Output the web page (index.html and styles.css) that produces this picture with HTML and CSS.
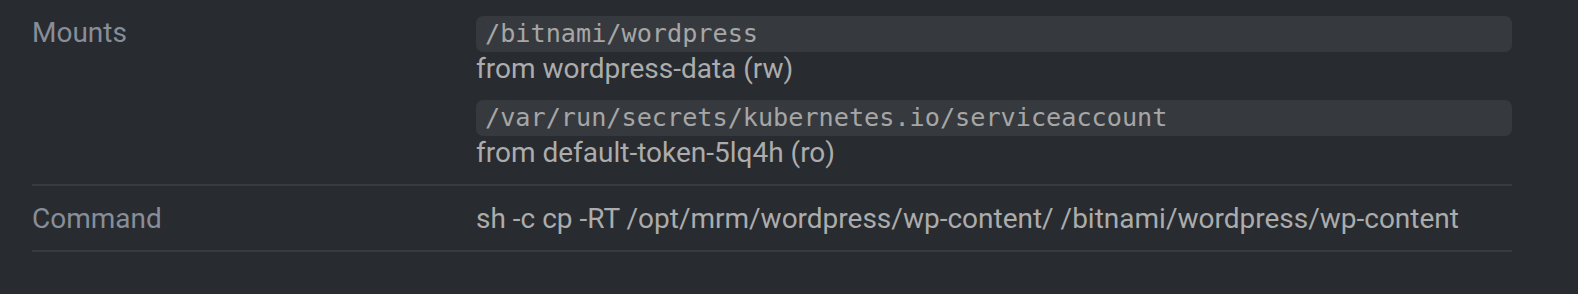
FILE: index.html
```html
<!DOCTYPE html>
<html lang="en">
<head>
  <meta charset="UTF-8" />
  <meta name="viewport" content="width=device-width, initial-scale=1.0"/>
  <title>Container details</title>
  <link rel="stylesheet" href="styles.css">
</head>
<body>

  <div class="details">
    <div class="detail-row">
      <div class="detail-label">Mounts</div>
      <div class="detail-value">
        <div class="mount">
          <code class="mount-path">/bitnami/wordpress</code>
          <div class="mount-source">from wordpress-data (rw)</div>
        </div>
        <div class="mount">
          <code class="mount-path">/var/run/secrets/kubernetes.io/serviceaccount</code>
          <div class="mount-source">from default-token-5lq4h (ro)</div>
        </div>
      </div>
    </div>

    <div class="detail-row">
      <div class="detail-label">Command</div>
      <div class="detail-value">sh -c cp -RT /opt/mrm/wordpress/wp-content/ /bitnami/wordpress/wp-content</div>
    </div>
  </div>

</body>
</html>
```

FILE: styles.css
```css
body {
  margin: 0;
  background-color: #282b2f;
  font-family: Roboto, "Liberation Sans", sans-serif;
  font-size: 28px;
  color: #acacac;
}

.details {
  width: 1480px;
  padding-left: 32px;
}

.detail-row {
  display: flex;
  padding: 16px 0 15px;
  border-bottom: 2px solid #383b40;
}

.detail-label {
  flex: 0 0 30%;
  color: #878e99;
}

.detail-value {
  flex: 1;
  min-width: 0;
}

.mount + .mount {
  margin-top: 15px;
}

.mount-path {
  display: block;
  background-color: #363a3f;
  border-radius: 7px;
  padding: 3px 9px;
  font-family: "DejaVu Sans Mono", "Liberation Mono", monospace;
  font-size: 25.2px;
  line-height: 30px;
  color: #a6a6a6;
}
```
